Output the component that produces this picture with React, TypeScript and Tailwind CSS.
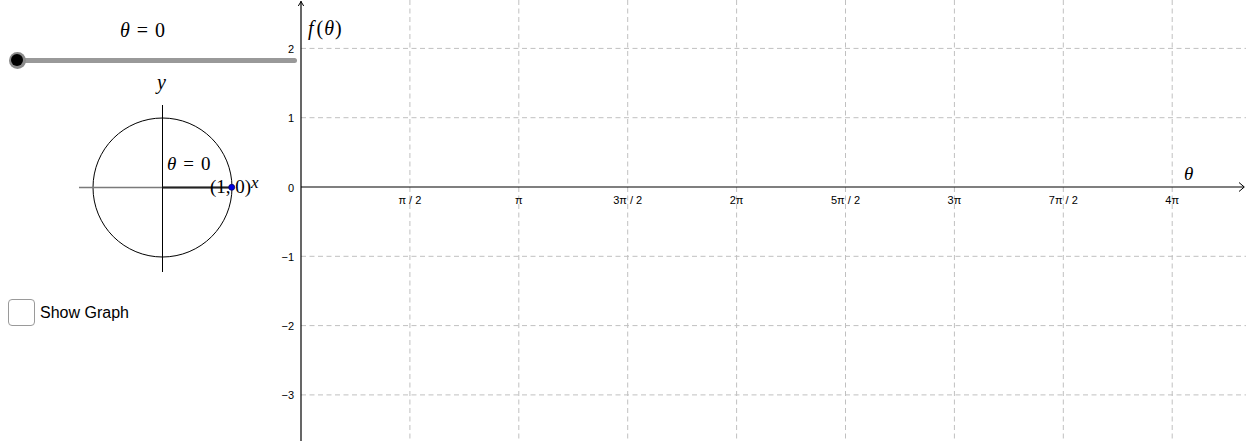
import React, { useState } from 'react'

const serif = '"Liberation Serif", "DejaVu Serif", serif'
const sans = '"Liberation Sans", Arial, sans-serif'

const X0 = 301
const Y0 = 187
const UX = 108.9 // px per pi/2
const UY = 69.3 // px per unit

const xTicks = ['π / 2', 'π', '3π / 2', '2π', '5π / 2', '3π', '7π / 2', '4π']
const yTicks = [2, 1, -1, -2, -3]

const UnitCircle = () => (
  <svg width={276} height={222} viewBox="0 68 276 222" className="block">
    <circle cx={162.5} cy={187.5} r={69.5} fill="none" stroke="#000" strokeWidth={1} />
    <line x1={79} y1={187.5} x2={232} y2={187.5} stroke="#7a7a7a" strokeWidth={1.5} />
    <line x1={162.5} y1={105} x2={162.5} y2={272} stroke="#000" strokeWidth={1} />
    <line x1={162.5} y1={187.5} x2={232} y2={187.5} stroke="#222" strokeWidth={2} />
    <text x={157} y={89} fontFamily={serif} fontStyle="italic" fontSize={20} fill="#000">y</text>
    <text x={167} y={170} fontFamily={serif} fontSize={19} fill="#000">
      <tspan fontStyle="italic">θ</tspan>
      <tspan dx={7}>=</tspan>
      <tspan dx={7}>0</tspan>
    </text>
    <text x={210} y={193} fontFamily={serif} fontSize={19} fill="#000">(1, 0)</text>
    <text x={251} y={188} fontFamily={serif} fontStyle="italic" fontSize={17} fill="#000">x</text>
    <circle cx={231.7} cy={187.3} r={3} fill="#0000e0" stroke="#00006a" strokeWidth={0.8} />
  </svg>
)

const Graph = () => (
  <svg width={970} height={441} viewBox="276 0 970 441" className="block shrink-0">
    {xTicks.map((_, i) => {
      const x = X0 + UX * (i + 1)
      return (
        <line key={'v' + i} x1={x} y1={0} x2={x} y2={441} stroke="#c0c0c0" strokeWidth={1} strokeDasharray="5 3.5" />
      )
    })}
    {yTicks.map((v) => {
      const y = Y0 - UY * v
      return (
        <line key={'h' + v} x1={X0} y1={y} x2={1246} y2={y} stroke="#c0c0c0" strokeWidth={1} strokeDasharray="5 3.5" />
      )
    })}
    <line x1={X0} y1={Y0} x2={1244} y2={Y0} stroke="#000" strokeWidth={1.2} />
    <line x1={X0} y1={1} x2={X0} y2={441} stroke="#000" strokeWidth={1.2} />
    <polyline points="298.3,6 301,1.5 303.7,6" fill="none" stroke="#000" strokeWidth={1} />
    <polyline points="1239,182.5 1244.3,187 1239,191.5" fill="none" stroke="#000" strokeWidth={1} />
    {xTicks.map((t, i) => (
      <text key={t} x={X0 + UX * (i + 1)} y={204} textAnchor="middle" fontFamily={sans} fontSize={11} fill="#000">
        {t}
      </text>
    ))}
    {[...yTicks, 0].map((v) => (
      <text key={'l' + v} x={294} y={Y0 - UY * v + 4.5} textAnchor="end" fontFamily={sans} fontSize={11} fill="#000">
        {v < 0 ? '\u2212' + Math.abs(v) : v}
      </text>
    ))}
    <text x={308} y={35} fontFamily={serif} fontSize={20} fill="#000">
      <tspan fontStyle="italic">f</tspan>
      <tspan dx={3}>(</tspan>
      <tspan dx={1} fontStyle="italic">θ</tspan>
      <tspan dx={1}>)</tspan>
    </text>
    <text x={1184} y={180} fontFamily={serif} fontStyle="italic" fontSize={19} fill="#000">θ</text>
  </svg>
)

export default function App() {
  const [checked, setChecked] = useState(false)

  return (
    <div className="flex w-[1246px] h-[441px] bg-white overflow-hidden">
      <div className="w-[276px] shrink-0 flex flex-col">
        <div className="h-[52px] pt-[20px] pl-[120px] text-[20px] leading-[20px] text-black" style={{ fontFamily: serif }}>
          <span className="italic">θ</span>
          <span className="mx-[7px]">=</span>
          <span>0</span>
        </div>
        <div className="relative h-[16px] flex items-center">
          <div className="ml-[17px] w-[280px] h-[5px] rounded-full bg-[#999] shrink-0" />
          <div className="absolute left-[8.5px] top-[-0.5px] w-[17px] h-[17px] rounded-full bg-[#8a8a8a] flex items-center justify-center">
            <div className="w-[12px] h-[12px] rounded-full bg-black" />
          </div>
        </div>
        <UnitCircle />
        <label className="flex items-center pt-[9px] pl-[8px] cursor-pointer">
          <button
            type="button"
            onClick={() => setChecked((c) => !c)}
            className="w-[27px] h-[27px] border border-[#9a9a9a] rounded-[4px] bg-white flex items-center justify-center"
          >
            {checked && <span className="text-[16px] leading-none">✓</span>}
          </button>
          <span className="ml-[5px] text-[16px] text-black" style={{ fontFamily: sans }}>
            Show Graph
          </span>
        </label>
      </div>
      <Graph />
    </div>
  )
}
